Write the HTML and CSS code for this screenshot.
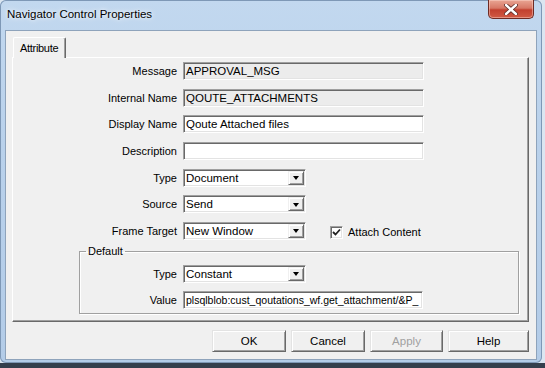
FILE: index.html
```html
<!DOCTYPE html>
<html lang="en">
<head>
    <meta charset="UTF-8">
    <title>Navigator Control Properties</title>
    <link rel="stylesheet" href="styles.css">
</head>
<body>
    <div class="window">
        <div class="titlebar">
            <span class="title">Navigator Control Properties</span>
            <div class="close">
                <svg width="14" height="11" viewBox="0 0 14 11">
                    <path d="M2 1 L12 10 M12 1 L2 10" stroke="#5a2a26" stroke-width="4" stroke-linecap="round"/>
                    <path d="M2 1 L12 10 M12 1 L2 10" stroke="#fff" stroke-width="2.4" stroke-linecap="round"/>
                </svg>
            </div>
        </div>

        <div class="client">
            <div class="tabs">
                <div class="tab">Attribute</div>
            </div>

            <div class="panel">
                <div class="row">
                    <span class="lbl">Message</span>
                    <div class="field ro">APPROVAL_MSG</div>
                </div>
                <div class="row">
                    <span class="lbl">Internal Name</span>
                    <div class="field ro">QOUTE_ATTACHMENTS</div>
                </div>
                <div class="row">
                    <span class="lbl">Display Name</span>
                    <div class="field">Qoute Attached files</div>
                </div>
                <div class="row">
                    <span class="lbl">Description</span>
                    <div class="field"></div>
                </div>
                <div class="row">
                    <span class="lbl">Type</span>
                    <div class="combo"><span class="val">Document</span><span class="drop"></span></div>
                </div>
                <div class="row">
                    <span class="lbl">Source</span>
                    <div class="combo"><span class="val">Send</span><span class="drop"></span></div>
                </div>
                <div class="row">
                    <span class="lbl">Frame Target</span>
                    <div class="combo"><span class="val">New Window</span><span class="drop"></span></div>
                    <div class="check">
                        <span class="box">
                            <svg width="9" height="9" viewBox="0 0 9 9">
                                <path d="M1 4 L3.5 6.5 L8 1.5" fill="none" stroke="#222" stroke-width="1.8"/>
                            </svg>
                        </span>
                        Attach Content
                    </div>
                </div>

                <fieldset class="group">
                    <legend>Default</legend>
                    <div class="row">
                        <span class="lbl">Type</span>
                        <div class="combo"><span class="val">Constant</span><span class="drop"></span></div>
                    </div>
                    <div class="row">
                        <span class="lbl">Value</span>
                        <div class="field value">plsqlblob:cust_qoutations_wf.get_attachment/&amp;P_</div>
                    </div>
                </fieldset>
            </div>

            <div class="buttons">
                <div class="btn">OK</div>
                <div class="btn">Cancel</div>
                <div class="btn disabled">Apply</div>
                <div class="btn help">Help</div>
            </div>
        </div>
    </div>
</body>
</html>
```

FILE: styles.css
```css
body {
    margin: 0;
    width: 545px;
    height: 368px;
    overflow: hidden;
    background: linear-gradient(to bottom, #dbe6f1 0, #dbe6f1 363px, #343f4d 363px);
    font-family: "Liberation Sans", Arial, sans-serif;
    font-size: 11px;
    color: #000;
}

.window {
    width: 542px;
    height: 363px;
    box-sizing: border-box;
    padding: 0 5px 0 5px;
    border-radius: 6px;
    background: linear-gradient(to bottom, #c2d8ef 0, #b9d1eb 40%, #b3cce8 100%);
    box-shadow: inset 0 0 0 1px #7e98b6;
    display: flex;
    flex-direction: column;
}

.titlebar {
    height: 30px;
    display: flex;
    align-items: flex-start;
}
.title {
    margin: 8px 0 0 2px;
    font-size: 11.5px;
    text-shadow: 0 0 6px #fff, 0 0 3px #eaf2fb;
}
.close {
    margin-left: auto;
    margin-right: 3px;
    width: 46px;
    height: 19px;
    box-sizing: border-box;
    border: 1px solid #6e2b24;
    border-top: none;
    border-radius: 0 0 5px 5px;
    background: linear-gradient(to bottom, #e9a594 0, #d77866 45%, #c2402f 55%, #d05a44 100%);
    box-shadow: inset 0 0 0 1px rgba(255,220,210,.45);
    display: flex;
    align-items: center;
    justify-content: center;
}

.client {
    height: 330px;
    box-sizing: border-box;
    background: #f0f0f0;
    border: 1px solid #8ea3bb;
    display: flex;
    flex-direction: column;
}

.tabs {
    display: flex;
    padding: 6px 0 0 7px;
}
.tab {
    width: 53px;
    height: 21px;
    box-sizing: border-box;
    padding: 4px 0 0 6px;
    margin-bottom: -1px;
    background: #f0f0f0;
    border-top: 1px solid #fff;
    border-left: 1px solid #fff;
    border-right: 1px solid #696969;
    box-shadow: inset -1px 0 0 #a0a0a0;
    border-radius: 2px 2px 0 0;
    letter-spacing: -0.3px;
    position: relative;
}

.panel {
    margin: 0 7px 0 6px;
    height: 265px;
    box-sizing: border-box;
    border-top: 1px solid #fff;
    border-left: 1px solid #fff;
    border-right: 1px solid #696969;
    border-bottom: 1px solid #696969;
    box-shadow: inset -1px -1px 0 #a0a0a0;
    padding-top: 4px;
    display: flex;
    flex-direction: column;
    gap: 8.67px;
}

.row {
    display: flex;
    align-items: center;
    gap: 6px;
    height: 18px;
}
.lbl {
    width: 164px;
    text-align: right;
    flex: none;
}

.field, .combo {
    height: 18px;
    box-sizing: border-box;
    border: 1px solid;
    border-color: #a0a0a0 #fff #fff #a0a0a0;
    box-shadow: inset 1px 1px 0 #696969, inset -1px -1px 0 #e3e3e3;
    background: #fff;
    font-size: 11.5px;
    line-height: 16px;
    white-space: nowrap;
    overflow: hidden;
}
.field {
    width: 241px;
    padding: 0 2px 0 2px;
}
.field.ro {
    background: #ececec;
}
.field.value {
    width: 240px;
    font-size: 10.5px;
}

.combo {
    width: 123px;
    display: flex;
    align-items: center;
    padding: 0 2px 0 2px;
}
.combo .val {
    flex: 1;
}
.drop {
    width: 16px;
    height: 14px;
    box-sizing: border-box;
    background: #f0f0f0;
    border: 1px solid;
    border-color: #f0f0f0 #696969 #696969 #f0f0f0;
    box-shadow: inset 1px 1px 0 #fff, inset -1px -1px 0 #a0a0a0;
    display: flex;
    align-items: center;
    justify-content: center;
    margin-right: -1px;
}
.drop::after {
    content: "";
    border-left: 3.5px solid transparent;
    border-right: 3.5px solid transparent;
    border-top: 4px solid #000;
    margin-top: 1px;
}

.check {
    display: flex;
    align-items: center;
    margin-left: 18px;
    margin-top: 3px;
    gap: 5px;
}
.check .box {
    width: 13px;
    height: 13px;
    box-sizing: border-box;
    border: 1px solid;
    border-color: #a0a0a0 #fff #fff #a0a0a0;
    box-shadow: inset 1px 1px 0 #696969, inset -1px -1px 0 #e3e3e3;
    background: #fff;
    display: flex;
    align-items: center;
    justify-content: center;
}

.group {
    margin: -4px 9px 0 66px;
    padding: 7px 0 4px 0;
    border: 1px solid #a0a0a0;
    box-shadow: inset 1px 1px 0 #fff, 1px 1px 0 #fff;
    display: flex;
    flex-direction: column;
    gap: 8.67px;
    min-inline-size: 0;
}
.group legend {
    margin-left: 6px;
    padding: 0 2px;
    font-size: 11px;
    line-height: 13px;
}
.group .lbl {
    width: 97px;
}

.buttons {
    display: flex;
    justify-content: flex-end;
    gap: 5px;
    padding: 8px 7px 0 0;
}
.btn {
    width: 74px;
    height: 22px;
    box-sizing: border-box;
    border: 1px solid;
    border-color: #e3e3e3 #696969 #696969 #e3e3e3;
    box-shadow: inset 1px 1px 0 #fff, inset -1px -1px 0 #a0a0a0;
    background: #f0f0f0;
    display: flex;
    align-items: center;
    justify-content: center;
    font-size: 11.5px;
}
.btn.disabled {
    color: #a0a0a0;
    width: 73px;
}
.btn.help {
    width: 81px;
}
```
